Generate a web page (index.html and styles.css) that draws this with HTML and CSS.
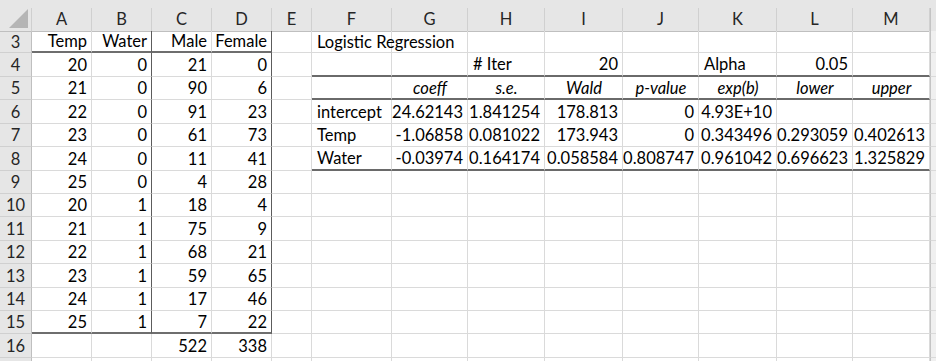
FILE: index.html
```html
<!DOCTYPE html>
<html>
<head>
<meta charset="utf-8">
<link rel="stylesheet" href="styles.css">
</head>
<body>
<div class="sheet">
  <div class="topstrip"></div>
  <div class="row hdr">
    <div class="corner"><span class="tri"></span></div>
    <div class="ch">A</div><div class="ch">B</div><div class="ch">C</div><div class="ch">D</div><div class="ch">E</div>
    <div class="ch">F</div><div class="ch">G</div><div class="ch">H</div><div class="ch">I</div><div class="ch">J</div>
    <div class="ch">K</div><div class="ch">L</div><div class="ch">M</div><div class="ch edge"></div>
  </div>
  <div class="row h22">
    <div class="rh">3</div>
    <div class="c n bb">Temp</div><div class="c n bb br">Water</div><div class="c n bb">Male</div><div class="c n bb br">Female</div><div class="c"></div>
    <div class="c t">Logistic Regression</div><div class="c"></div><div class="c"></div><div class="c"></div><div class="c"></div><div class="c"></div><div class="c"></div><div class="c"></div><div class="c edge"></div>
  </div>
  <div class="row h24">
    <div class="rh">4</div>
    <div class="c n">20</div><div class="c n br">0</div><div class="c n">21</div><div class="c n br">0</div><div class="c"></div>
    <div class="c bm"></div><div class="c bm"></div><div class="c t bm">#&nbsp;Iter</div><div class="c n bm">20</div><div class="c bm"></div><div class="c t bm">Alpha</div><div class="c n bm">0.05</div><div class="c bm"></div><div class="c edge"></div>
  </div>
  <div class="row h23">
    <div class="rh">5</div>
    <div class="c n">21</div><div class="c n br">0</div><div class="c n">90</div><div class="c n br">6</div><div class="c"></div>
    <div class="c bt"></div><div class="c m bt">coeff</div><div class="c m bt">s.e.</div><div class="c m bt">Wald</div><div class="c m bt">p-value</div><div class="c m bt">exp(b)</div><div class="c m bt">lower</div><div class="c m bt">upper</div><div class="c edge"></div>
  </div>
  <div class="row h24">
    <div class="rh">6</div>
    <div class="c n">22</div><div class="c n br">0</div><div class="c n">91</div><div class="c n br">23</div><div class="c"></div>
    <div class="c t">intercept</div><div class="c n">24.62143</div><div class="c n">1.841254</div><div class="c n">178.813</div><div class="c n">0</div><div class="c n">4.93E+10</div><div class="c"></div><div class="c"></div><div class="c edge"></div>
  </div>
  <div class="row h23">
    <div class="rh">7</div>
    <div class="c n">23</div><div class="c n br">0</div><div class="c n">61</div><div class="c n br">73</div><div class="c"></div>
    <div class="c t">Temp</div><div class="c n">-1.06858</div><div class="c n">0.081022</div><div class="c n">173.943</div><div class="c n">0</div><div class="c n">0.343496</div><div class="c n">0.293059</div><div class="c n">0.402613</div><div class="c edge"></div>
  </div>
  <div class="row h24">
    <div class="rh">8</div>
    <div class="c n">24</div><div class="c n br">0</div><div class="c n">11</div><div class="c n br">41</div><div class="c"></div>
    <div class="c t bm">Water</div><div class="c n bm">-0.03974</div><div class="c n bm">0.164174</div><div class="c n bm">0.058584</div><div class="c n bm">0.808747</div><div class="c n bm">0.961042</div><div class="c n bm">0.696623</div><div class="c n bm">1.325829</div><div class="c edge"></div>
  </div>
  <div class="row h23">
    <div class="rh">9</div>
    <div class="c n">25</div><div class="c n br">0</div><div class="c n">4</div><div class="c n br">28</div><div class="c"></div>
    <div class="c"></div><div class="c"></div><div class="c"></div><div class="c"></div><div class="c"></div><div class="c"></div><div class="c"></div><div class="c"></div><div class="c edge"></div>
  </div>
  <div class="row h23">
    <div class="rh">10</div>
    <div class="c n">20</div><div class="c n br">1</div><div class="c n">18</div><div class="c n br">4</div><div class="c"></div>
    <div class="c"></div><div class="c"></div><div class="c"></div><div class="c"></div><div class="c"></div><div class="c"></div><div class="c"></div><div class="c"></div><div class="c edge"></div>
  </div>
  <div class="row h24">
    <div class="rh">11</div>
    <div class="c n">21</div><div class="c n br">1</div><div class="c n">75</div><div class="c n br">9</div><div class="c"></div>
    <div class="c"></div><div class="c"></div><div class="c"></div><div class="c"></div><div class="c"></div><div class="c"></div><div class="c"></div><div class="c"></div><div class="c edge"></div>
  </div>
  <div class="row h23">
    <div class="rh">12</div>
    <div class="c n">22</div><div class="c n br">1</div><div class="c n">68</div><div class="c n br">21</div><div class="c"></div>
    <div class="c"></div><div class="c"></div><div class="c"></div><div class="c"></div><div class="c"></div><div class="c"></div><div class="c"></div><div class="c"></div><div class="c edge"></div>
  </div>
  <div class="row h24">
    <div class="rh">13</div>
    <div class="c n">23</div><div class="c n br">1</div><div class="c n">59</div><div class="c n br">65</div><div class="c"></div>
    <div class="c"></div><div class="c"></div><div class="c"></div><div class="c"></div><div class="c"></div><div class="c"></div><div class="c"></div><div class="c"></div><div class="c edge"></div>
  </div>
  <div class="row h23">
    <div class="rh">14</div>
    <div class="c n">24</div><div class="c n br">1</div><div class="c n">17</div><div class="c n br">46</div><div class="c"></div>
    <div class="c"></div><div class="c"></div><div class="c"></div><div class="c"></div><div class="c"></div><div class="c"></div><div class="c"></div><div class="c"></div><div class="c edge"></div>
  </div>
  <div class="row h23">
    <div class="rh">15</div>
    <div class="c n bb">25</div><div class="c n bb br">1</div><div class="c n bb">7</div><div class="c n bb br">22</div><div class="c"></div>
    <div class="c"></div><div class="c"></div><div class="c"></div><div class="c"></div><div class="c"></div><div class="c"></div><div class="c"></div><div class="c"></div><div class="c edge"></div>
  </div>
  <div class="row h24">
    <div class="rh">16</div>
    <div class="c"></div><div class="c"></div><div class="c n">522</div><div class="c n">338</div><div class="c"></div>
    <div class="c"></div><div class="c"></div><div class="c"></div><div class="c"></div><div class="c"></div><div class="c"></div><div class="c"></div><div class="c"></div><div class="c edge"></div>
  </div>
  <div class="row h23">
    <div class="rh"></div>
    <div class="c"></div><div class="c"></div><div class="c"></div><div class="c"></div><div class="c"></div>
    <div class="c"></div><div class="c"></div><div class="c"></div><div class="c"></div><div class="c"></div><div class="c"></div><div class="c"></div><div class="c"></div><div class="c edge"></div>
  </div>
</div>
</body>
</html>
```

FILE: styles.css
```css
html, body {
  margin: 0;
  padding: 0;
  background: #ffffff;
}
body {
  width: 936px;
  height: 361px;
  overflow: hidden;
  font-family: Lato, "Liberation Sans", sans-serif;
  font-size: 16.5px;
  color: #000;
}
.sheet {
  width: 936px;
}
.topstrip {
  height: 8px;
  background: #e6e6e6;
}
.row {
  display: grid;
  grid-template-columns: 32px 60px 60px 60px 60px 40px 80px 76px 77px 78px 76px 78px 76px 77px 6px;
}
.hdr { height: 23px; }
.h22 { height: 22px; }
.h23 { height: 23px; }
.h24 { height: 24px; }

.corner {
  position: relative;
  background: #e6e6e6;
  border-right: 1px solid #cfcfcf;
  border-bottom: 1px solid #bfbfbf;
  box-sizing: border-box;
}
.tri {
  position: absolute;
  right: 3px;
  bottom: 3px;
  width: 0;
  height: 0;
  border-left: 19px solid transparent;
  border-bottom: 19px solid #b5b5b5;
}
.ch {
  background: #e6e6e6;
  border-right: 1px solid #d0d0d0;
  border-bottom: 1px solid #bfbfbf;
  box-sizing: border-box;
  text-align: center;
  line-height: 23px;
  color: #262626;
}
.ch.edge {
  border-left: 1px solid #c4c4c4;
  border-right: none;
}
.rh {
  background: #e6e6e6;
  border-right: 1px solid #bfbfbf;
  border-bottom: 1px solid #d0d0d0;
  box-sizing: border-box;
  text-align: center;
  color: #262626;
  display: flex;
  align-items: center;
  justify-content: center;
}
.c {
  border-right: 1px solid #dadada;
  border-bottom: 1px solid #dadada;
  box-sizing: border-box;
  padding: 0 4px 0 5px;
  white-space: nowrap;
  overflow: visible;
  display: flex;
  align-items: center;
}
.c.edge {
  background: #f0f0f0;
  border-left: 1px solid #c4c4c4;
  border-right: none;
  padding: 0;
}
.n { justify-content: flex-end; }
.t { justify-content: flex-start; }
.m { justify-content: center; font-style: italic; }

.bb { border-bottom: 2px solid #6e6e6e; }
.br { border-right: 1px solid #5c5c5c; }
.bm { border-bottom: 2px solid #6a6a6a; }
.bt { border-bottom: 2px solid #6a6a6a; }
```
